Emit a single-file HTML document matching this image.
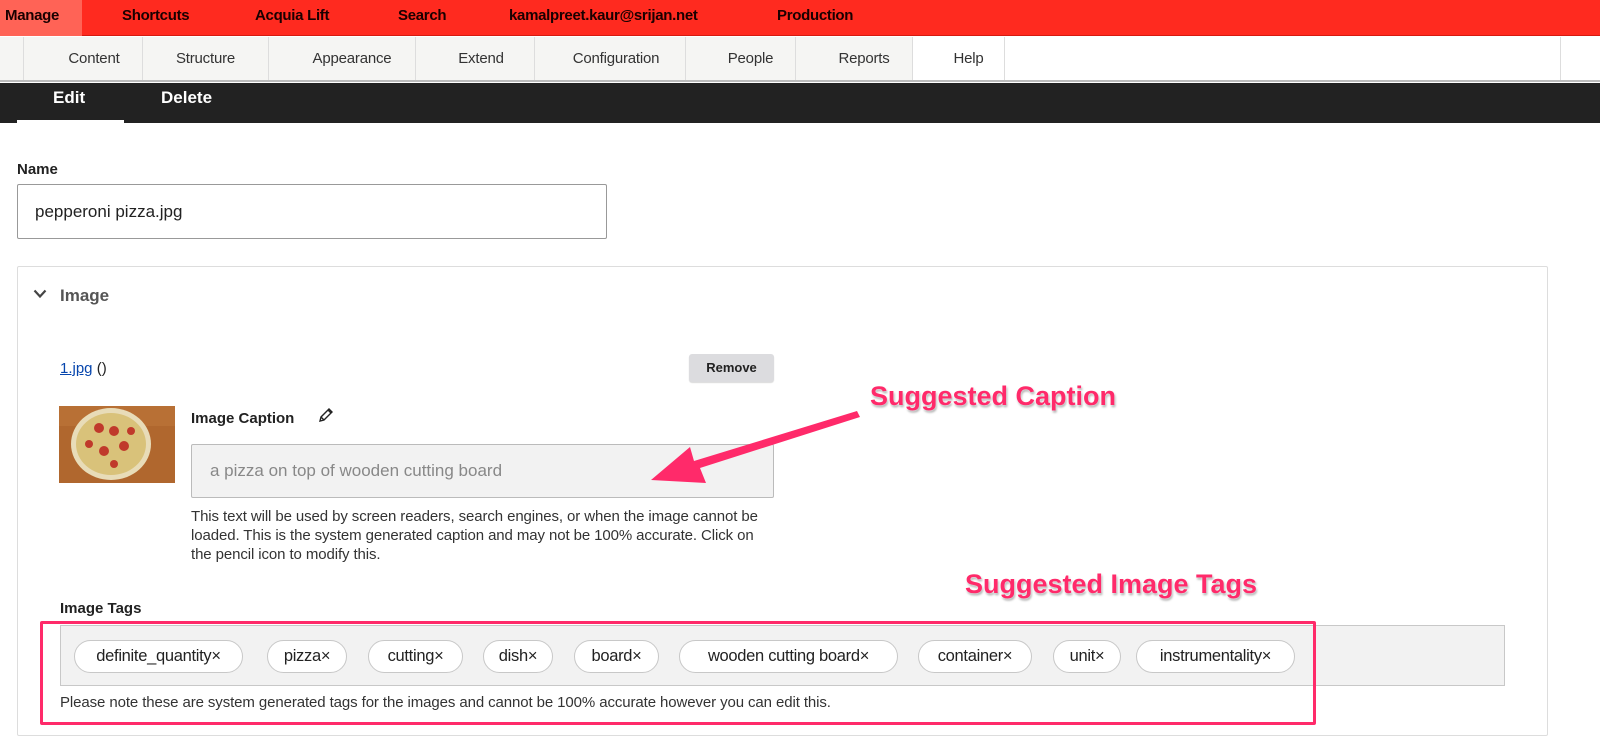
<!DOCTYPE html>
<html><head><meta charset="utf-8"><style>
*{box-sizing:border-box;margin:0;padding:0}
body{width:1600px;height:747px;overflow:hidden;background:#fff;font-family:"Liberation Sans",sans-serif;color:#222;position:relative}
.a{position:absolute;white-space:nowrap}
.top{position:absolute;left:0;top:0;width:1600px;height:36px;background:#ff2a1f;border-bottom:1px solid #d51a10}
.top span{position:absolute;top:7px;font-weight:bold;font-size:15px;color:#1a0000;letter-spacing:-0.3px}
.nav{position:absolute;left:0;top:37px;width:1600px;height:45px;background:#fff;border-bottom:2px solid #bbb}
.nav div{position:absolute;top:0;height:43px;background:#f5f5f3;border-left:1px solid #ddd;font-size:15px;color:#333;text-align:center;line-height:43px;letter-spacing:-0.2px}
.dark{position:absolute;left:0;top:83px;width:1600px;height:40px;background:#222}
.pill{position:absolute;top:640px;height:33px;border:1px solid #c8c8c8;border-radius:17px;background:#fff;font-size:16.5px;line-height:31px;text-align:center;color:#222;letter-spacing:-0.3px}
.help{font-size:15px;color:#333;letter-spacing:-0.1px}
.pink{color:#ff2a6a;font-weight:bold;font-size:27px;text-shadow:0 0 2px #fff,1px 2px 2px rgba(0,0,0,.35)}
</style></head><body>
<div class="top">
<div class="a" style="left:0;top:0;width:82px;height:36px;background:#ff6356"></div>
<span style="left:5px">Manage</span><span style="left:122px">Shortcuts</span><span style="left:255px">Acquia Lift</span><span style="left:398px">Search</span><span style="left:509px">kamalpreet.kaur@srijan.net</span><span style="left:777px">Production</span>
</div>
<div class="nav">
<div style="left:0;width:23px;border-left:none"></div>
<div style="left:23px;width:119px;padding-left:22px">Content</div>
<div style="left:142px;width:126px">Structure</div>
<div style="left:268px;width:147px;padding-left:20px">Appearance</div>
<div style="left:415px;width:119px;padding-left:12px">Extend</div>
<div style="left:534px;width:151px;padding-left:12px">Configuration</div>
<div style="left:685px;width:110px;padding-left:20px">People</div>
<div style="left:795px;width:117px;padding-left:20px">Reports</div>
<div style="left:912px;width:92px;background:#fff;padding-left:20px">Help</div>
<div style="left:1004px;width:556px;background:#fff"></div>
<div style="left:1560px;width:40px;background:#fff"></div>
</div>
<div class="dark">
<span class="a" style="left:53px;top:5px;color:#fff;font-weight:bold;font-size:17px">Edit</span>
<span class="a" style="left:161px;top:5px;color:#fff;font-weight:bold;font-size:17px">Delete</span>
<div class="a" style="left:17px;top:37px;width:107px;height:3px;background:#fff"></div>
</div>
<span class="a" style="left:17px;top:161px;font-weight:bold;font-size:15px">Name</span>
<div class="a" style="left:17px;top:184px;width:590px;height:55px;border:1px solid #999;border-radius:2px;font-size:17px;line-height:53px;padding-left:17px;color:#222">pepperoni pizza.jpg</div>
<div class="a" style="left:17px;top:266px;width:1531px;height:470px;border:1px solid #ddd;border-radius:2px"></div>
<svg class="a" style="left:33px;top:289px" width="14" height="10" viewBox="0 0 14 10"><path d="M1.5 1.5 L7 7.5 L12.5 1.5" fill="none" stroke="#444" stroke-width="2.2"/></svg>
<span class="a" style="left:60px;top:286px;font-weight:bold;font-size:17px;color:#555">Image</span>
<span class="a" style="left:60px;top:360px;font-size:15px"><span style="color:#0645ad;text-decoration:underline">1.jpg</span> ()</span>
<div class="a" style="left:689px;top:354px;width:85px;height:28px;background:#dcdcdf;border-radius:3px;box-shadow:0 1px 1px rgba(0,0,0,.15);font-weight:bold;font-size:13px;text-align:center;line-height:28px">Remove</div>
<svg class="a" style="left:59px;top:406px" width="116" height="77" viewBox="0 0 116 77">
<rect width="116" height="77" fill="#b0672e"/><rect x="0" y="0" width="116" height="20" fill="#c07a3c" opacity=".5"/>
<ellipse cx="52" cy="38" rx="40" ry="36" fill="#e8dcb8"/><ellipse cx="52" cy="38" rx="35" ry="31" fill="#d9c27a"/>
<circle cx="40" cy="22" r="5" fill="#c0392b"/><circle cx="55" cy="25" r="5" fill="#c0392b"/><circle cx="65" cy="40" r="5" fill="#c0392b"/><circle cx="45" cy="45" r="5" fill="#c0392b"/><circle cx="30" cy="38" r="4" fill="#c0392b"/><circle cx="55" cy="58" r="4" fill="#c0392b"/><circle cx="72" cy="25" r="4" fill="#c0392b"/>
</svg>
<span class="a" style="left:191px;top:410px;font-weight:bold;font-size:15px">Image Caption</span>
<svg class="a" style="left:317px;top:406px" width="18" height="18" viewBox="0 0 18 18"><path d="M3 15 L4 11 L12 3 L15 6 L7 14 Z M11 4 L14 7 M4 11 L7 14" fill="none" stroke="#222" stroke-width="1.4"/></svg>
<div class="a" style="left:191px;top:444px;width:583px;height:54px;background:#f2f2f2;border:1px solid #bbb;border-radius:2px;font-size:17px;line-height:52px;padding-left:18px;color:#888">a pizza on top of wooden cutting board</div>
<div class="a help" style="left:191px;top:507px;line-height:19px">This text will be used by screen readers, search engines, or when the image cannot be<br>loaded. This is the system generated caption and may not be 100% accurate. Click on<br>the pencil icon to modify this.</div>
<svg class="a" style="left:640px;top:395px" width="230" height="100" viewBox="640 395 230 100">
<polygon points="857,411 860,417 700,468 706,483 651,480 690,447 694,461" fill="#ff2a6a"/>
</svg>
<span class="a pink" style="left:870px;top:381px">Suggested Caption</span>
<span class="a pink" style="left:965px;top:569px">Suggested Image Tags</span>
<span class="a" style="left:60px;top:600px;font-weight:bold;font-size:15px">Image Tags</span>
<div class="a" style="left:60px;top:625px;width:1445px;height:61px;background:#f2f2f2;border:1px solid #c8c8c8"></div>
<div class="pill" style="left:74px;width:169px">definite_quantity×</div>
<div class="pill" style="left:267px;width:80px">pizza×</div>
<div class="pill" style="left:368px;width:95px">cutting×</div>
<div class="pill" style="left:483px;width:70px">dish×</div>
<div class="pill" style="left:574px;width:85px">board×</div>
<div class="pill" style="left:679px;width:219px">wooden cutting board×</div>
<div class="pill" style="left:918px;width:114px">container×</div>
<div class="pill" style="left:1053px;width:68px">unit×</div>
<div class="pill" style="left:1136px;width:159px">instrumentality×</div>
<span class="a help" style="left:60px;top:694px">Please note these are system generated tags for the images and cannot be 100% accurate however you can edit this.</span>
<div class="a" style="left:40px;top:621px;width:1276px;height:104px;border:3px solid #ff2a6a;border-radius:2px"></div>
</body></html>
